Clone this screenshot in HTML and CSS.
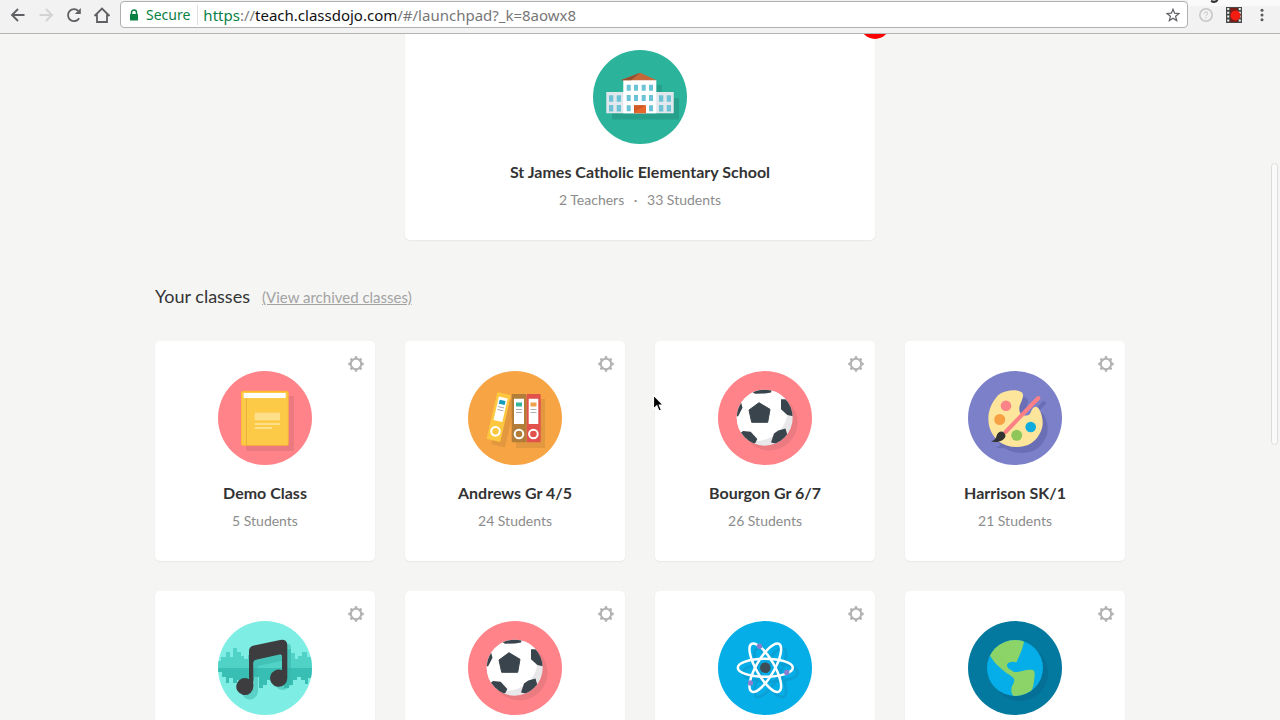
FILE: index.html
```html
<!DOCTYPE html>
<html lang="en">
<head>
  <meta charset="UTF-8" />
  <meta name="viewport" content="width=device-width, initial-scale=1.0"/>
  <title>ClassDojo</title>
  <link rel="stylesheet" href="styles.css">
</head>
<body>
  <!-- Shared icons -->
  <svg class="sprite" aria-hidden="true">
    <symbol id="gear" viewBox="0 0 16 16">
      <circle cx="8" cy="8" r="5.2" fill="none" stroke="#b3b3b3" stroke-width="2"/>
      <g stroke="#b3b3b3" stroke-width="2.8" stroke-linecap="round">
        <path d="M8 1.500v.6M8 13.900v.6M1.500 8h.6M13.900 8h.6M3.400 3.400l.5.5M12.100 12.100l.5.5M3.400 12.600l.5-.5M12.100 3.900l.5-.5"/>
      </g>
    </symbol>
    <symbol id="ball" viewBox="0 0 94 94">
      <clipPath id="ballClip"><circle cx="46.7" cy="46.7" r="28"/></clipPath>
      <circle cx="47" cy="47" r="47" fill="#ff8388"/>
      <circle cx="51.5" cy="51.5" r="28" fill="#ec7b81"/>
      <g clip-path="url(#ballClip)">
        <rect x="18" y="18" width="58" height="58" fill="#e8e8ea"/>
        <circle cx="38" cy="38" r="32" fill="#fff"/>
        <g fill="#39444c">
          <path d="M41 31.7 52 38.3 49.7 51.3H33.7L31 39z" stroke="#39444c" stroke-linejoin="round"/>
          <path d="M34 18h20l-1 3.5-6 1-10 .2-3-2z"/>
          <path d="M63 28.3h6.3L76 33v12.5l-6.7-1.5-6.3-5.7z"/>
          <path d="M22.7 30l1.8 6.7L20 45.5l-3-1z"/>
          <path d="M25 60l7.7.7 6.6 7.3-2 4-6 3-10-12z"/>
          <path d="M67.5 57.5l2 7-8 9-8.5-2 3-9 4.3-3z"/>
        </g>
      </g>
    </symbol>
  </svg>

  <header class="toolbar">
    <nav class="nav-buttons">
      <button type="button" aria-label="Back">
        <svg width="18" height="18" viewBox="0 0 18 18" fill="none" stroke="#5f6063" stroke-width="1.8"><path d="M15.500 9H3M9 3 3 9l6 6"/></svg>
      </button>
      <button type="button" aria-label="Forward" disabled>
        <svg width="18" height="18" viewBox="0 0 18 18" fill="none" stroke="#d3d3d3" stroke-width="1.8"><path d="M2.500 9H15M9 3l6 6-6 6"/></svg>
      </button>
      <button type="button" aria-label="Reload">
        <svg width="18" height="18" viewBox="0 0 18 18"><path d="M14.2 12.2A6 6 0 1 1 13.4 5" fill="none" stroke="#5f6063" stroke-width="1.8"/><path d="M15.8 2v6H9.800z" fill="#5f6063"/></svg>
      </button>
      <button type="button" aria-label="Home">
        <svg width="18" height="18" viewBox="0 0 18 18" fill="none" stroke="#5f6063" stroke-width="1.8"><path d="M1.500 10 9 2.500l7.500 7.500M4 8.500V16h10V8.500"/></svg>
      </button>
    </nav>

    <div class="address-bar">
      <svg class="lock" width="10" height="12" viewBox="0 0 10 12"><path d="M2.5 6V3.6a2.5 2.5 0 0 1 5 0V6" fill="none" stroke="#0b8043" stroke-width="1.5"/><rect x="1" y="5" width="8" height="6.5" rx=".6" fill="#0b8043"/></svg>
      <span class="secure">Secure</span>
      <label class="origin" for="path"><span class="scheme">https</span><span class="muted">://</span>teach.classdojo.com</label>
      <input class="path" id="path" type="text" value="/#/launchpad?_k=8aowx8" spellcheck="false">
      <button type="button" aria-label="Bookmark this page">
        <svg width="14" height="14" viewBox="0 0 14 14"><path d="M7 1.2 8.6 5.2 13 5.5 9.6 8.3 10.7 12.6 7 10.2 3.3 12.6 4.4 8.3 1 5.5 5.4 5.2z" fill="none" stroke="#5f6063" stroke-width="1.2"/></svg>
      </button>
    </div>

    <div class="extensions">
      <button type="button" aria-label="Help">
        <svg width="16" height="16" viewBox="0 0 16 16" fill="none" stroke="#c6c6c6"><circle cx="8" cy="8" r="6.2" stroke-width="1.5"/><path d="M6.3 6.6a1.7 1.7 0 1 1 2.4 1.5q-.7.3-.7 1.1M8 10.2v1.2"/></svg>
      </button>
      <button type="button" aria-label="Screen recorder">
        <svg width="16" height="16" viewBox="0 0 16 16"><rect width="16" height="16" fill="#484848"/><path d="M2.2 1v14M13.8 1v14" stroke="#e8f3e8" stroke-width="2" stroke-dasharray="2 1.8"/><rect x="4.2" y="1" width="7.6" height="14" fill="#7c1c17"/><circle cx="9.5" cy="8.5" r="5" fill="#f41d12"/></svg>
      </button>
      <button type="button" aria-label="Menu">
        <svg width="16" height="16" viewBox="0 0 16 16" fill="#5a5a5a"><circle cx="8" cy="3.2" r="1.5"/><circle cx="8" cy="8" r="1.5"/><circle cx="8" cy="12.8" r="1.5"/></svg>
      </button>
    </div>
    <svg class="overlay-edge" width="92" height="6" viewBox="0 0 92 6"><rect width="92" height="6" fill="#fafafa"/><path d="M29.500 0q-2 3-6.500 1" fill="none" stroke="#333" stroke-width="2.200"/></svg>
  </header>

  <main class="page">
    <section class="card school">
      <span class="badge"></span>
      <svg class="icon" viewBox="0 0 94 94">
        <circle cx="47" cy="47" r="47" fill="#2bb39c"/>
        <path d="M19 63.300h61.700V48H86v21.500H19zM63.300 35h5.500v8h-5.500z" fill="#269f8b"/>
        <path d="M13.300 42h67.400v21.300H13.300z" fill="#e1e7eb"/>
        <path d="M30.300 30h33v33.300h-33z" fill="#fff"/>
        <path d="M27.700 30.300 47.300 22.700 63.700 30.300z" fill="#c5683a"/>
        <path d="M27.700 30.300 47.300 22.700 38 30.300z" fill="#97502f"/>
        <g fill="#6cc3d6">
          <path d="M33.700 34.700h4v6h-4zM41 34.700h4v6h-4zM48.700 34.700h4v6h-4zM56 34.700h4v6h-4z"/>
          <path d="M33.700 45h4v6h-4zM41 45h4v6h-4zM48.700 45h4v6h-4zM56 45h4v6h-4z"/>
          <path d="M33.700 55.300h4v6h-4zM56 55.300h4v6h-4z"/>
          <path d="M16 45.300h4.300v6.500H16zM23.700 45.300H28v6.500h-4.300zM66 45.300h4.300v6.500H66zM73.700 45.300H78v6.500h-4.300z"/>
          <path d="M16 55h4.300v6.500H16zM23.700 55H28v6.500h-4.300zM66 55h4.300v6.500H66zM73.700 55H78v6.500h-4.300z"/>
        </g>
        <path d="M41 55.300h12v8H41z" fill="#e7672d"/>
        <path d="M41 55.300h12l-12 7z" fill="#cf5a25"/>
      </svg>
      <h2 class="name">St James Catholic Elementary School</h2>
      <p class="count">2 Teachers <span class="dot">·</span> 33 Students</p>
    </section>

    <div class="classes-header">
      <h1>Your classes</h1>
      <a href="#">(View archived classes)</a>
    </div>

    <section class="classes">
      <article class="card">
        <button class="settings" type="button" aria-label="Class settings"><svg width="16" height="16"><use href="#gear"/></svg></button>
        <svg class="icon" viewBox="0 0 94 94">
          <circle cx="47" cy="47" r="47" fill="#ff8388"/>
          <rect x="28" y="25" width="48" height="55" rx="2" fill="#ea7a80"/>
          <rect x="23" y="19.700" width="47.700" height="55" rx="2" fill="#fbb830"/>
          <rect x="23.700" y="21" width="46" height="53" rx="1" fill="#fdca47"/>
          <path d="M25.700 22h42v5h-42z" fill="#fff"/>
          <path d="M28.400 27v47" stroke="#dca938" stroke-width=".8"/>
          <path d="M36.700 41.700H62v7.600H36.700zM36.700 52H62v2H36.700zM36.700 56H54v2H36.700z" fill="#fee08a"/>
        </svg>
        <h2 class="name">Demo Class</h2>
        <p class="count">5 Students</p>
      </article>

      <article class="card">
        <button class="settings" type="button" aria-label="Class settings"><svg width="16" height="16"><use href="#gear"/></svg></button>
        <svg class="icon" viewBox="0 0 94 94">
          <circle cx="47" cy="47" r="47" fill="#f6a444"/>
          <rect x="48" y="28" width="29" height="49" fill="#e3983f"/>
          <rect x="-7" y="-24" width="14" height="48" fill="#e3983f" transform="translate(35.500 51.500) rotate(13)"/>
          <!-- leaning binder -->
          <g transform="translate(30.800 46) rotate(13)">
            <rect x="-7" y="-24" width="14" height="48" rx="1" fill="#fdc83f"/>
            <rect x="-4.500" y="-20" width="9" height="24" fill="#fff"/>
            <rect x="-3" y="-17" width="6" height="4" fill="#149cbc"/>
            <path d="M-3-10h6M-3-7h6" stroke="#999" stroke-width=".8"/>
            <circle cy="14.700" r="4.300" fill="none" stroke="#fff" stroke-width="2"/>
          </g>
          <rect x="43.700" y="23" width="14.800" height="48.300" rx="1" fill="#b17d38"/>
          <rect x="58.700" y="23" width="14" height="48.300" rx="1" fill="#e0524b"/>
          <path d="M46 27.700h10V53H46zM60.700 27.700h9.600V53h-9.600z" fill="#fff"/>
          <path d="M48 31.500h6v4h-6z" fill="#35b498"/>
          <path d="M62.500 31.500h6v4h-6z" fill="#f0a14d"/>
          <path d="M48 38.500h6M48 41.500h6M62.500 38.500h6M62.500 41.500h6" stroke="#999" stroke-width=".8"/>
          <g fill="none" stroke="#fff" stroke-width="2"><circle cx="51" cy="63" r="4.300"/><circle cx="65.400" cy="63" r="4.300"/></g>
        </svg>
        <h2 class="name">Andrews Gr 4/5</h2>
        <p class="count">24 Students</p>
      </article>

      <article class="card">
        <button class="settings" type="button" aria-label="Class settings"><svg width="16" height="16"><use href="#gear"/></svg></button>
        <svg class="icon" viewBox="0 0 94 94"><use href="#ball"/></svg>
        <h2 class="name">Bourgon Gr 6/7</h2>
        <p class="count">26 Students</p>
      </article>

      <article class="card">
        <button class="settings" type="button" aria-label="Class settings"><svg width="16" height="16"><use href="#gear"/></svg></button>
        <svg class="icon" viewBox="0 0 94 94">
          <circle cx="47" cy="47" r="47" fill="#7b80c9"/>
          <g fill="#6a6fb5" transform="translate(5 6)">
            <path d="M54.300 21.700C57 26 51.300 33 51.300 37.300S53 44.500 56 44.500C63 45 62 42 64 38.500S69 35 71 38C75 45 76 54 72.700 60.700 68 71 60 76 48.700 76 34 76 25 68 21.300 55.700 18.500 44 22 33 30.300 24 38 18.500 50 18 54.300 21.700z"/>
            <path d="M34 61c4 0 5 4 2 7.500-3 3-9 3.500-13 2q5-2 6-5.500z"/>
          </g>
          <path d="M76 32 43 66" stroke="#6a6fb5" stroke-width="4" stroke-linecap="round"/>
          <path d="M54.300 21.700C57 26 51.300 33 51.300 37.300S53 44.500 56 44.500C63 45 62 42 64 38.500S69 35 71 38C75 45 76 54 72.700 60.700 68 71 60 76 48.700 76 34 76 25 68 21.300 55.700 18.500 44 22 33 30.300 24 38 18.500 50 18 54.300 21.700z" fill="#fde59b"/>
          <circle cx="38" cy="34.700" r="5.300" fill="#fb8489"/>
          <circle cx="31.700" cy="48.500" r="5.500" fill="#f6a244"/>
          <circle cx="62.700" cy="56" r="5.300" fill="#0facdf"/>
          <circle cx="48.700" cy="64.300" r="5.500" fill="#8fc65a"/>
          <path d="M70.300 27 37.500 61" stroke="#fb8186" stroke-width="4" stroke-linecap="round"/>
          <path d="M33 60.500q4 0 4.500 4.500c-1 5-8 7-14.500 5.500q5-2 5.500-5.500 1-4 4.500-4.500z" fill="#333"/>
        </svg>
        <h2 class="name">Harrison SK/1</h2>
        <p class="count">21 Students</p>
      </article>

      <article class="card">
        <button class="settings" type="button" aria-label="Class settings"><svg width="16" height="16"><use href="#gear"/></svg></button>
        <svg class="icon" viewBox="0 0 94 94">
          <clipPath id="musicClip"><circle cx="47" cy="47" r="47"/></clipPath>
          <circle cx="47" cy="47" r="47" fill="#7eeee4"/>
          <!-- waveform -->
          <g clip-path="url(#musicClip)">
            <path d="M0 47V40H3V36H8V31H12V36H15V27H19V31H23V35H26V38H30V34H35V30H42V36H50V33H57V30H62V35H68V28H73V32H77V38H80V35H84V31H89V36H94V47z" fill="#50d3c6"/>
            <path d="M0 47V51H4V56H8V62H11V57H15V62H19V59H24V65H31V60H36V56H41V67H45V64H49V59H54V56H60V62H66V67H71V64H75V59H79V56H83V59H87V63H90V57H94V47z" fill="#38beb3"/>
          </g>
          <path d="M36 34q0-4 4-5L68 23q5-1 5 4v34a8.300 8.300 0 1 1-5-8V39L40 45v26a8.300 8.300 0 1 1-4-8z" fill="#36b3a9" opacity=".5"/>
          <path d="M31 30q0-4 4-5.300L62 19q7-1 7.300 5v33.300a8.600 8.600 0 1 1-5.300-8V35.500q0-2.500-2.500-2L38 38.700q-2.700.7-2.700 3V65.700a8.500 8.500 0 1 1-4.300-7.500z" fill="#3d3d3f"/>
        </svg>
      </article>

      <article class="card">
        <button class="settings" type="button" aria-label="Class settings"><svg width="16" height="16"><use href="#gear"/></svg></button>
        <svg class="icon" viewBox="0 0 94 94"><use href="#ball"/></svg>
      </article>

      <article class="card">
        <button class="settings" type="button" aria-label="Class settings"><svg width="16" height="16"><use href="#gear"/></svg></button>
        <svg class="icon" viewBox="0 0 94 94">
          <circle cx="47" cy="47" r="47" fill="#05aee6"/>
          <g fill="none" stroke="#0b9fd4" stroke-width="2.600">
            <ellipse cx="52.300" cy="51.700" rx="27.500" ry="9"/>
            <ellipse cx="52.300" cy="51.700" rx="27.500" ry="9" transform="rotate(60 52.300 51.700)"/>
            <ellipse cx="52.300" cy="51.700" rx="27.500" ry="9" transform="rotate(120 52.300 51.700)"/>
          </g>
          <circle cx="47.300" cy="46.700" r="5.300" fill="#3c4d58"/>
          <g fill="none" stroke="#fff" stroke-width="2.500">
            <ellipse cx="47.300" cy="46.700" rx="27.500" ry="9"/>
            <ellipse cx="47.300" cy="46.700" rx="27.500" ry="9" transform="rotate(60 47.300 46.700)"/>
            <ellipse cx="47.300" cy="46.700" rx="27.500" ry="9" transform="rotate(120 47.300 46.700)"/>
          </g>
          <g fill="#8a7fce"><circle cx="41.500" cy="25.300" r="2.700"/><circle cx="32.500" cy="62" r="2.700"/><circle cx="68.700" cy="51.500" r="2.700"/></g>
        </svg>
      </article>

      <article class="card">
        <button class="settings" type="button" aria-label="Class settings"><svg width="16" height="16"><use href="#gear"/></svg></button>
        <svg class="icon" viewBox="0 0 94 94">
          <clipPath id="globeClip"><circle cx="47" cy="47" r="28"/></clipPath>
          <circle cx="47" cy="47" r="47" fill="#04799f"/>
          <circle cx="52" cy="52" r="28" fill="#066f96"/>
          <g clip-path="url(#globeClip)">
            <path d="M19 19h56v56H19z" fill="#05aee8"/>
            <path d="M20 35 22 18H58L56 21C54 30 52 33 48.700 40.700c-1 1.500-2-.5-5 .3-3 0-5 1.500-4.700 4 1 3 3 3 6.300 5.700 5 1.500 9-2 18-2 3 0 3.500 2 3.400 5.300-.7 6-.7 12-3.700 16.700L60 77H47C43 73 43 70 43.600 66 46 62 47 60 45.700 57.300 43 54 39 53 33 47.500 29 44 25 40 22.700 35.500z" fill="#8dd468"/>
          </g>
        </svg>
      </article>
    </section>

    <span class="scroll-thumb"></span>
  </main>

  <svg class="cursor" width="14" height="20" viewBox="0 0 14 20"><path d="M1.500 1v14l3.300-3.200L7 17l2.500-1-2.200-5h4z" fill="#000" stroke="#fff" stroke-width="1.200"/></svg>
</body>
</html>
```
FILE: styles.css
```css
* {
  margin: 0;
  padding: 0;
  box-sizing: border-box;
}

body {
  font-family: Lato, 'Liberation Sans', sans-serif;
  background: #f5f5f4;
  color: #333333;
  height: 100vh;
  display: flex;
  flex-direction: column;
  overflow: hidden;
  position: relative;
}

button {
  background: none;
  border: none;
  cursor: pointer;
}

svg {
  display: block;
}

.sprite {
  position: absolute;
  width: 0;
  height: 0;
}

/* Browser toolbar */
.toolbar {
  position: relative;
  display: flex;
  align-items: center;
  flex: none;
  height: 34px;
  padding: 1px 10px 5px 9px;
  background: #f2f2f2;
  border-bottom: 1px solid #b4b4b4;
}

.nav-buttons {
  display: flex;
  gap: 10px;
  margin-right: 9px;
}

.address-bar {
  flex: 1;
  display: flex;
  align-items: center;
  height: 27px;
  padding: 0 7px 0 8px;
  background: #ffffff;
  border: 1px solid #b0b0b0;
  border-radius: 4px;
  font-family: 'Noto Sans', sans-serif;
  font-size: 15px;
  line-height: 20px;
}

.secure {
  margin-left: 7px;
  padding-right: 7px;
  border-right: 1px solid #e0e0e0;
  font-size: 14px;
}

.secure,
.scheme {
  color: #0b8043;
}

.origin {
  margin-left: 5px;
  color: #111111;
}

.muted {
  color: #808080;
}

.path {
  flex: 1;
  min-width: 0;
  border: none;
  outline: none;
  background: none;
  color: #777777;
  font: inherit;
}

.extensions {
  display: flex;
  gap: 12px;
  margin-left: 10px;
}

.overlay-edge {
  position: absolute;
  top: 0;
  right: 0;
}

/* Launchpad */
.page {
  position: relative;
  flex: 1;
  min-height: 0;
  overflow: hidden;
}

.card {
  position: relative;
  min-height: 220px;
  padding-top: 30px;
  background: #ffffff;
  border-radius: 5px;
  box-shadow: 0 1px 2px rgba(0, 0, 0, 0.06);
  text-align: center;
}

/* top edge is scrolled under the toolbar */
.school {
  max-width: 470px;
  margin: -14px auto 0;
}

.badge {
  position: absolute;
  top: -11px;
  right: -15px;
  width: 30px;
  height: 30px;
  border-radius: 50%;
  background: #ff0000;
}

.icon {
  width: 94px;
  height: 94px;
  margin: 0 auto 17px;
}

.name {
  font-size: 16px;
  font-weight: 700;
  line-height: 22px;
}

.count {
  margin-top: 7px;
  font-size: 14px;
  line-height: 20px;
  color: #8c8c8c;
}

.dot {
  margin: 0 6px;
}

.settings {
  position: absolute;
  top: 15px;
  right: 11px;
}

.classes-header {
  display: flex;
  align-items: baseline;
  gap: 12px;
  max-width: 970px;
  margin: 44px auto 33px;
}

.classes-header h1 {
  font-size: 18px;
  font-weight: 400;
  line-height: 24px;
}

.classes-header a {
  font-size: 15px;
  color: #a3a3a3;
}

.classes {
  display: grid;
  grid-template-columns: repeat(4, 1fr);
  gap: 30px;
  max-width: 970px;
  margin: 0 auto;
}

.scroll-thumb {
  position: absolute;
  top: 129px;
  right: 2px;
  width: 7px;
  height: 282px;
  background: #fafafa;
  border: 1px solid #dcdcdc;
  border-radius: 4px;
}

.cursor {
  position: absolute;
  top: 394px;
  left: 652px;
}
```
